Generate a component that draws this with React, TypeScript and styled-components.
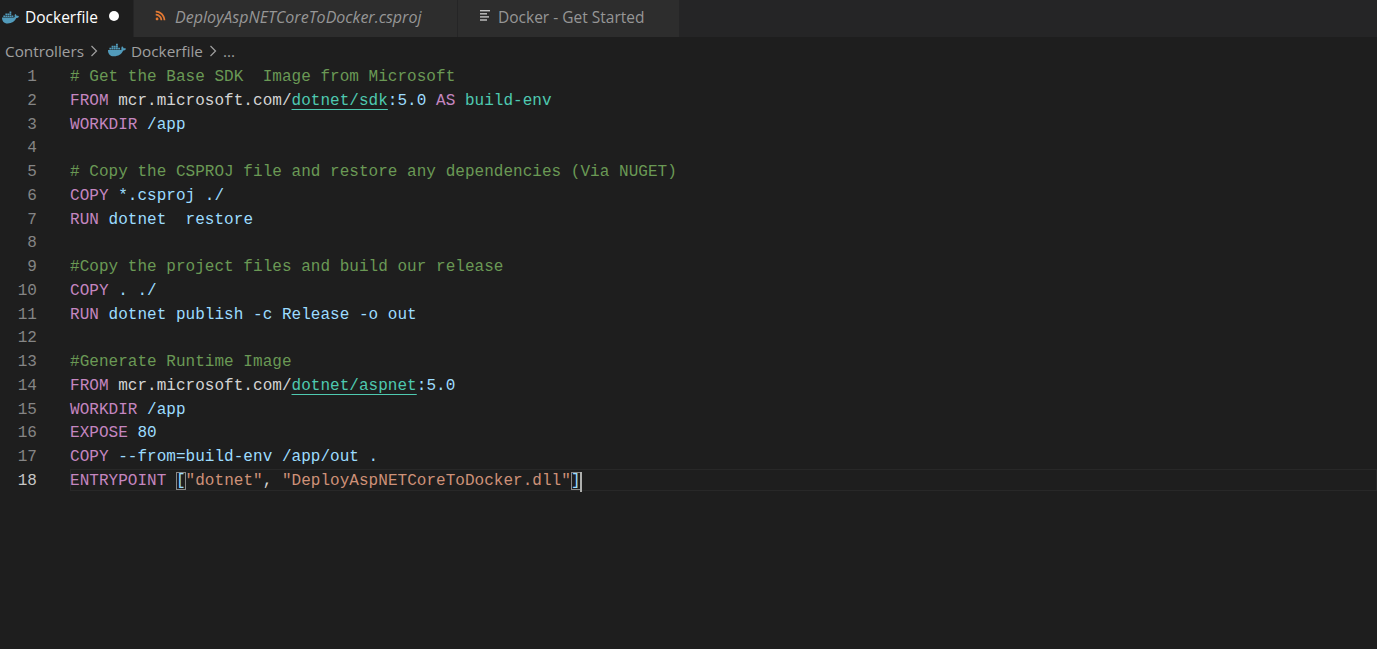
import React from "react";
import styled, { createGlobalStyle } from "styled-components";
import { FaDocker, FaRss } from "react-icons/fa";

type Kind = "comment" | "keyword" | "variable" | "type" | "plain" | "string" | "link";
type Token = [Kind, string];

const colors: Record<Kind, string> = {
	comment: "#6a9955",
	keyword: "#c586c0",
	variable: "#9cdcfe",
	type: "#4ec9b0",
	plain: "#d4d4d4",
	string: "#ce9178",
	link: "#4ec9b0",
};

const lines: Token[][] = [
	[["comment", "# Get the Base SDK  Image from Microsoft"]],
	[
		["keyword", "FROM"],
		["plain", " mcr.microsoft.com/"],
		["link", "dotnet/sdk"],
		["variable", ":5.0"],
		["keyword", " AS"],
		["type", " build-env"],
	],
	[
		["keyword", "WORKDIR"],
		["variable", " /app"],
	],
	[],
	[["comment", "# Copy the CSPROJ file and restore any dependencies (Via NUGET)"]],
	[
		["keyword", "COPY"],
		["variable", " *.csproj ./"],
	],
	[
		["keyword", "RUN"],
		["variable", " dotnet  restore"],
	],
	[],
	[["comment", "#Copy the project files and build our release"]],
	[
		["keyword", "COPY"],
		["variable", " . ./"],
	],
	[
		["keyword", "RUN"],
		["variable", " dotnet publish -c Release -o out"],
	],
	[],
	[["comment", "#Generate Runtime Image"]],
	[
		["keyword", "FROM"],
		["plain", " mcr.microsoft.com/"],
		["link", "dotnet/aspnet"],
		["variable", ":5.0"],
	],
	[
		["keyword", "WORKDIR"],
		["variable", " /app"],
	],
	[
		["keyword", "EXPOSE"],
		["variable", " 80"],
	],
	[
		["keyword", "COPY"],
		["variable", " --from=build-env /app/out ."],
	],
];

export default function App() {
	return (
		<Page>
			<GlobalStyle />
			<TabBar>
				<Tab $active $width={134} $pad={2} $gap={6}>
					<DockerIcon $size={17} />
					<TabLabel $active>Dockerfile</TabLabel>
					<DirtyDot />
				</Tab>
				<Tab $width={324} $pad={21} $gap={9}>
					<RssIcon />
					<TabLabel $italic>DeployAspNETCoreToDocker.csproj</TabLabel>
				</Tab>
				<Tab $width={222} $pad={22} $gap={8}>
					<PreviewIcon viewBox="0 0 10 11">
						<rect x="0" y="0" width="10" height="1.4" />
						<rect x="0" y="3.1" width="7" height="1.4" />
						<rect x="0" y="6.2" width="9" height="1.4" />
						<rect x="0" y="9.3" width="7" height="1.4" />
					</PreviewIcon>
					<TabLabel>Docker - Get Started</TabLabel>
				</Tab>
			</TabBar>
			<Breadcrumbs>
				<span>Controllers</span>
				<Chevron viewBox="0 0 8 12">
					<path d="M1.5 1 L6.5 6 L1.5 11" />
				</Chevron>
				<CrumbIcon $size={18} />
				<span>Dockerfile</span>
				<Chevron viewBox="0 0 8 12">
					<path d="M1.5 1 L6.5 6 L1.5 11" />
				</Chevron>
				<Ellipsis>...</Ellipsis>
			</Breadcrumbs>
			<Editor>
				{lines.map((tokens, index) => (
					<Line key={index}>
						<LineNumber>{index + 1}</LineNumber>
						<Code>
							{tokens.map(([kind, text], i) => (
								<Tok key={i} $kind={kind}>
									{text}
								</Tok>
							))}
						</Code>
					</Line>
				))}
				<CurrentLine>
					<LineNumber $active>18</LineNumber>
					<Code>
						<Tok $kind="keyword">ENTRYPOINT</Tok>
						<Tok $kind="plain"> </Tok>
						<Bracket>[</Bracket>
						<Tok $kind="string">"dotnet"</Tok>
						<Tok $kind="plain">, </Tok>
						<Tok $kind="string">"DeployAspNETCoreToDocker.dll"</Tok>
						<Bracket>
							]
							<Cursor />
						</Bracket>
					</Code>
				</CurrentLine>
			</Editor>
		</Page>
	);
}

const GlobalStyle = createGlobalStyle`
	html, body {
		margin: 0;
		padding: 0;
		background: #1e1e1e;
		overflow: hidden;
	}
`;

const Page = styled.div`
	width: 1377px;
	height: 649px;
	background: #1e1e1e;
	font-family: "Open Sans", "Noto Sans", sans-serif;
	overflow: hidden;
`;

const TabBar = styled.div`
	display: flex;
	height: 37px;
	background: #252526;
`;

const Tab = styled.div<{ $active?: boolean; $width: number; $pad: number; $gap: number }>`
	display: flex;
	align-items: center;
	box-sizing: border-box;
	width: ${(p) => p.$width}px;
	padding-left: ${(p) => p.$pad}px;
	gap: ${(p) => p.$gap}px;
	background: ${(p) => (p.$active ? "#1e1e1e" : "#2d2d2d")};
	border-right: 1px solid #252526;
`;

const TabLabel = styled.span<{ $active?: boolean; $italic?: boolean }>`
	font-size: ${(p) => (p.$italic ? "16px" : "15.5px")};
	color: ${(p) => (p.$active ? "#ffffff" : "#969696")};
	font-style: ${(p) => (p.$italic ? "italic" : "normal")};
	margin-bottom: 3px;
`;

const DirtyDot = styled.span`
	width: 10px;
	height: 10px;
	border-radius: 50%;
	background: #ffffff;
	margin-left: 5px;
	margin-bottom: 6px;
`;

const DockerIcon = styled(FaDocker)<{ $size: number }>`
	width: ${(p) => p.$size}px;
	height: ${(p) => p.$size}px;
	color: #519aba;
	flex: none;
	margin-bottom: 3px;
`;

const CrumbIcon = styled(DockerIcon)`
	margin: 0 0 3px 5px;
`;

const RssIcon = styled(FaRss)`
	width: 11px;
	height: 11px;
	color: #e37933;
	margin-bottom: 7px;
`;

const PreviewIcon = styled.svg`
	width: 10px;
	height: 11px;
	fill: #c5c5c5;
	margin-bottom: 7px;
`;

const Breadcrumbs = styled.div`
	display: flex;
	align-items: center;
	height: 22px;
	margin-top: 3px;
	padding-left: 5px;
	gap: 5px;
	font-size: 15.3px;
	color: #a0a0a0;
`;

const Chevron = styled.svg`
	width: 8px;
	height: 12px;
	margin-left: 1px;
	fill: none;
	stroke: #a0a0a0;
	stroke-width: 1.2;
`;

const Ellipsis = styled.span`
	margin-left: 1px;
`;

const Editor = styled.div`
	margin-top: 3px;
	font-family: "Liberation Mono", monospace;
	font-size: 16px;
	letter-spacing: 0.03px;
`;

const Line = styled.div`
	display: flex;
	height: 23.76px;
	line-height: 25.76px;
	white-space: pre;
`;

const CurrentLine = styled(Line)`
	& > div {
		flex: 1;
		height: 22px;
		box-shadow: inset 0 0 0 1px #282828;
	}
`;

const LineNumber = styled.span<{ $active?: boolean }>`
	box-sizing: border-box;
	flex: none;
	width: 70px;
	padding-right: 33px;
	text-align: right;
	color: ${(p) => (p.$active ? "#c6c6c6" : "#858585")};
`;

const Code = styled.div``;

const Tok = styled.span<{ $kind: Kind }>`
	color: ${(p) => colors[p.$kind]};
	text-decoration: ${(p) => (p.$kind === "link" ? "underline" : "none")};
	text-underline-offset: 4px;
`;

const Bracket = styled.span`
	position: relative;
	color: #9cdcfe;
	box-shadow: inset 0 0 0 1px #888888;
`;

const Cursor = styled.span`
	position: absolute;
	top: 0;
	right: -1px;
	width: 2px;
	height: 20px;
	background: #aeafad;
`;
